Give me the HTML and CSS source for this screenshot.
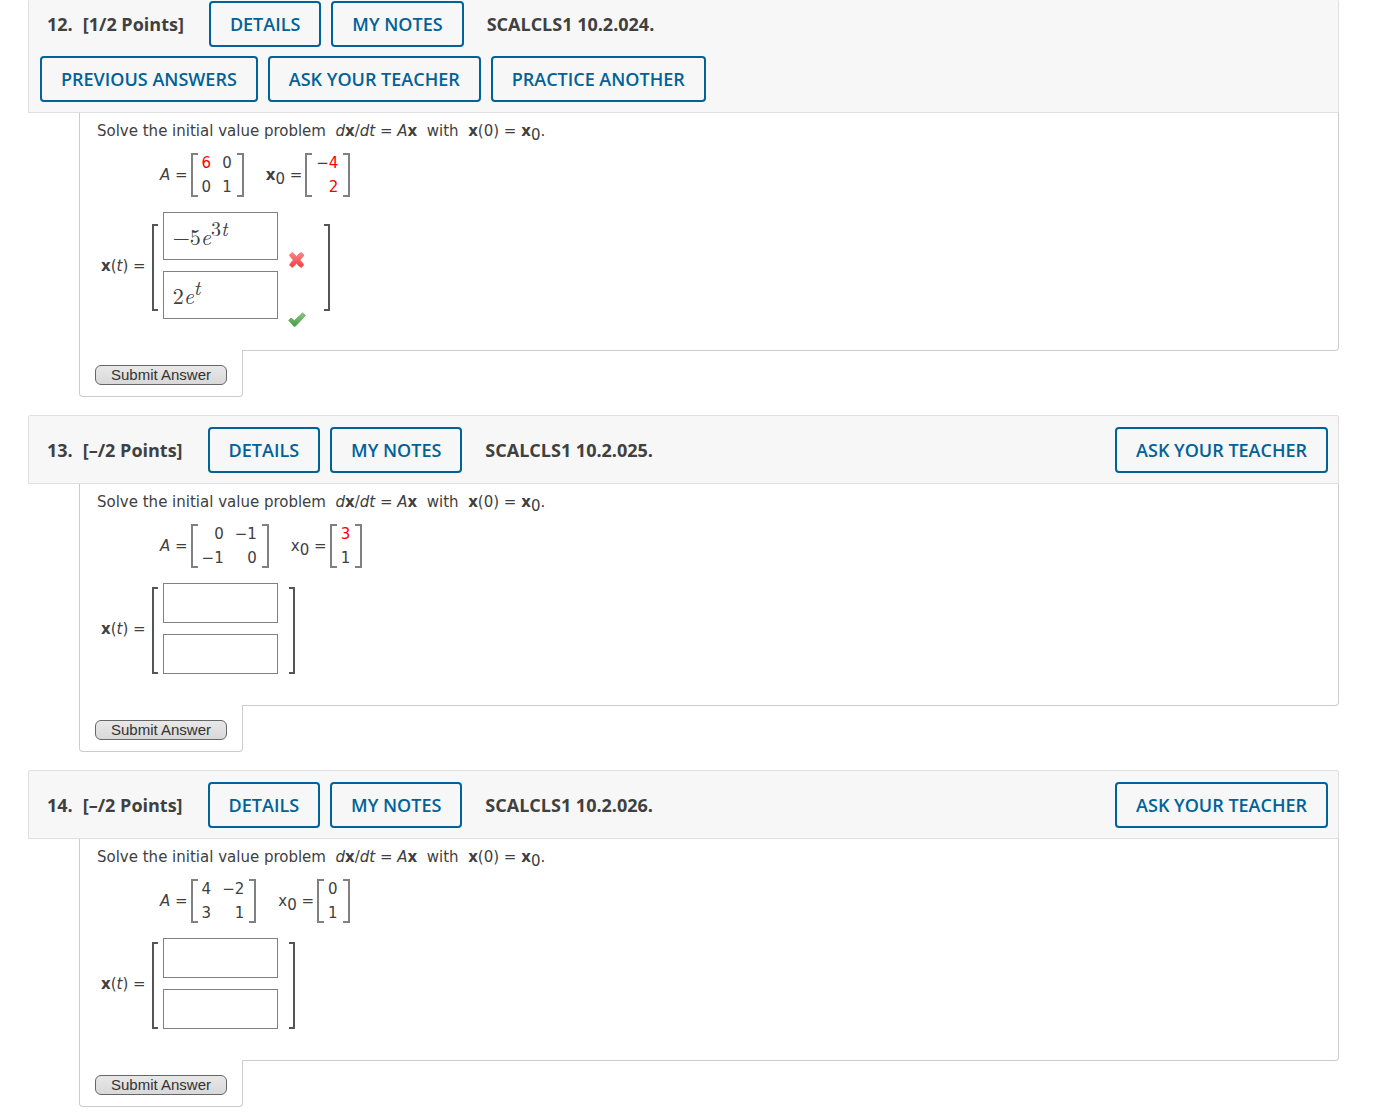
FILE: index.html
```
<!DOCTYPE html>
<html lang="en">
<head>
  <meta charset="UTF-8">
  <meta name="viewport" content="width=device-width, initial-scale=1">
  <title>SCALCLS1 10.2 Homework</title>
  <link rel="stylesheet" href="styles.css">
</head>
<body>
  <main>

    <section class="question first">
      <header class="question-header">
        <span class="number">12.</span>
        <span class="points">[1/2 Points]</span>
        <button class="btn" type="button">DETAILS</button>
        <button class="btn" type="button">MY NOTES</button>
        <span class="source">SCALCLS1 10.2.024.</span>
        <div class="header-row">
          <button class="btn" type="button">PREVIOUS ANSWERS</button>
          <button class="btn" type="button">ASK YOUR TEACHER</button>
          <button class="btn" type="button">PRACTICE ANOTHER</button>
        </div>
      </header>
      <form class="question-body">
        <div class="content">
          <p class="prompt">Solve the initial value problem &nbsp;<i>d</i><b>x</b>/<i>dt</i> = <i>A</i><b>x</b>&nbsp; with &nbsp;<b>x</b>(0) = <b>x</b><sub>0</sub>.</p>
          <div class="given">
            <span><i>A</i> =</span>
            <div class="matrix cols-2">
              <span class="red">6</span><span>0</span>
              <span>0</span><span>1</span>
            </div>
            <span class="vector-name"><b>x</b><sub>0</sub> =</span>
            <div class="matrix">
              <span><span>−</span><span class="red">4</span></span>
              <span class="red">2</span>
            </div>
          </div>
          <div class="answer">
            <span class="answer-name"><b>x</b>(<i>t</i>) =</span>
            <div class="bracket left"></div>
            <div class="fields">
              <div class="field math" role="textbox" contenteditable="true" aria-label="First component of x(t)">−5<i>e</i><sup>3<i>t</i></sup></div>
              <div class="field math" role="textbox" contenteditable="true" aria-label="Second component of x(t)">2<i>e</i><sup><i>t</i></sup></div>
            </div>
            <div class="marks">
              <svg class="mark" viewBox="0 0 18 18" role="img" aria-label="Incorrect">
                <defs>
                  <linearGradient id="wrong" x1="0" y1="0" x2="0" y2="1">
                    <stop offset="0" stop-color="#ff8584"/>
                    <stop offset="1" stop-color="#ee3e43"/>
                  </linearGradient>
                </defs>
                <path d="M1.5 4 4 1.5Q5 1.5 8.500 5.500 12 1.500 13.500 1.500L15.800 4Q15.800 5 12 9 15.800 13 15.800 14L13.500 16.500Q12 16.500 8.500 12.500 5 16.500 4 16.500L1.500 14Q1.500 13 5.300 9 1.500 5 1.500 4Z" fill="url(#wrong)" stroke="#f26b6d" stroke-width=".7"/>
              </svg>
              <svg class="mark" viewBox="0 0 18 18" role="img" aria-label="Correct">
                <defs>
                  <linearGradient id="right" x1="0" y1="0" x2="0" y2="1">
                    <stop offset="0" stop-color="#8bcb80"/>
                    <stop offset="1" stop-color="#439b43"/>
                  </linearGradient>
                </defs>
                <path d="M.7 9.300 3 7 6.400 9.600 14.500 2 17.400 4.300Q13 9.500 7.300 15.300L5.800 15.300Z" fill="url(#right)" stroke="#59a556" stroke-width=".8" stroke-linejoin="round"/>
              </svg>
            </div>
            <div class="bracket right"></div>
          </div>
        </div>
        <div class="submit-tab">
          <button class="submit-btn" type="button">Submit Answer</button>
        </div>
      </form>
    </section>

    <section class="question">
      <header class="question-header">
        <span class="number">13.</span>
        <span class="points">[–/2 Points]</span>
        <button class="btn" type="button">DETAILS</button>
        <button class="btn" type="button">MY NOTES</button>
        <span class="source">SCALCLS1 10.2.025.</span>
        <button class="btn push-right" type="button">ASK YOUR TEACHER</button>
      </header>
      <form class="question-body">
        <div class="content">
          <p class="prompt">Solve the initial value problem &nbsp;<i>d</i><b>x</b>/<i>dt</i> = <i>A</i><b>x</b>&nbsp; with &nbsp;<b>x</b>(0) = <b>x</b><sub>0</sub>.</p>
          <div class="given">
            <span><i>A</i> =</span>
            <div class="matrix cols-2">
              <span>0</span><span>−1</span>
              <span>−1</span><span>0</span>
            </div>
            <span class="vector-name">x<sub>0</sub> =</span>
            <div class="matrix">
              <span class="red">3</span>
              <span>1</span>
            </div>
          </div>
          <div class="answer">
            <span class="answer-name"><b>x</b>(<i>t</i>) =</span>
            <div class="bracket left"></div>
            <div class="fields">
              <input class="field" type="text" aria-label="First component of x(t)">
              <input class="field" type="text" aria-label="Second component of x(t)">
            </div>
            <div class="bracket right"></div>
          </div>
        </div>
        <div class="submit-tab">
          <button class="submit-btn" type="button">Submit Answer</button>
        </div>
      </form>
    </section>

    <section class="question">
      <header class="question-header">
        <span class="number">14.</span>
        <span class="points">[–/2 Points]</span>
        <button class="btn" type="button">DETAILS</button>
        <button class="btn" type="button">MY NOTES</button>
        <span class="source">SCALCLS1 10.2.026.</span>
        <button class="btn push-right" type="button">ASK YOUR TEACHER</button>
      </header>
      <form class="question-body">
        <div class="content">
          <p class="prompt">Solve the initial value problem &nbsp;<i>d</i><b>x</b>/<i>dt</i> = <i>A</i><b>x</b>&nbsp; with &nbsp;<b>x</b>(0) = <b>x</b><sub>0</sub>.</p>
          <div class="given">
            <span><i>A</i> =</span>
            <div class="matrix cols-2">
              <span>4</span><span>−2</span>
              <span>3</span><span>1</span>
            </div>
            <span class="vector-name">x<sub>0</sub> =</span>
            <div class="matrix">
              <span>0</span>
              <span>1</span>
            </div>
          </div>
          <div class="answer">
            <span class="answer-name"><b>x</b>(<i>t</i>) =</span>
            <div class="bracket left"></div>
            <div class="fields">
              <input class="field" type="text" aria-label="First component of x(t)">
              <input class="field" type="text" aria-label="Second component of x(t)">
            </div>
            <div class="bracket right"></div>
          </div>
        </div>
        <div class="submit-tab">
          <button class="submit-btn" type="button">Submit Answer</button>
        </div>
      </form>
    </section>

  </main>
</body>
</html>
```
FILE: styles.css
```
* {
  box-sizing: border-box;
}

body {
  margin: 0;
  padding: 0 50px 12px 28px;
  background: #fff;
  color: #404040;
  font-family: Verdana, "DejaVu Sans", sans-serif;
  font-size: 15px;
}

.question {
  margin-bottom: 18px;
}

.question:last-child {
  margin-bottom: 0;
}

/* Header bar */
.question-header {
  display: flex;
  flex-wrap: wrap;
  align-items: center;
  gap: 9px 10px;
  padding: 11px 10px 10px 18px;
  background: #f7f7f7;
  border: 1px solid #dfdfdf;
  border-radius: 2px 2px 0 0;
  font: 700 18px/24px "Open Sans", sans-serif;
}

.question.first .question-header {
  padding-top: 1px;
  border-top: none;
}

.points {
  margin-right: 15px;
}

.source {
  margin-left: 13px;
}

.header-row {
  display: flex;
  flex-basis: 100%;
  gap: 10px;
  margin-left: -7px;
}

.push-right {
  margin-left: auto;
}

.btn {
  height: 46px;
  padding: 0 19px;
  background: transparent;
  border: 2px solid #006298;
  border-radius: 4px;
  color: #006298;
  font: 600 18px/24px "Open Sans", sans-serif;
  cursor: pointer;
}

/* Question box */
.question-body {
  margin-left: 51px;
}

.content {
  padding: 8px 17px 31px;
  border: solid #ccc;
  border-width: 0 1px 1px;
  border-radius: 0 0 4px 0;
}

.prompt {
  margin: 0;
  line-height: 20px;
}

sub {
  font-size: 15px;
  line-height: 0;
}

.red {
  color: #f00;
}

.given {
  display: flex;
  align-items: center;
  gap: 3px;
  margin: 10px 0 0 63px;
}

.vector-name {
  margin-left: 19px;
}

.matrix {
  display: grid;
  column-gap: 11px;
  position: relative;
  padding: 0 12px 0 11px;
  line-height: 24px;
  text-align: right;
}

.matrix.cols-2 {
  grid-template-columns: auto auto;
}

.matrix::before,
.matrix::after {
  content: "";
  position: absolute;
  top: 2px;
  bottom: 2px;
  width: 5px;
  border: 2px solid #808080;
}

.matrix::before {
  left: 0;
  border-right: none;
}

.matrix::after {
  right: 0;
  border-left: none;
}

/* Answer vector */
.answer {
  display: flex;
  align-items: center;
  margin: 13px 0 0 4px;
}

.answer-name {
  margin-right: 6px;
}

.bracket {
  width: 6px;
  height: 87px;
  margin-top: 3px;
  border: 2px solid #555;
}

.bracket.left {
  margin-right: 5px;
  border-right: none;
}

.bracket.right {
  margin-left: 11px;
  border-left: none;
}

.fields {
  display: flex;
  flex-direction: column;
  gap: 11px;
}

.field {
  width: 115px;
  height: 40px;
  padding: 0 9px;
  background: #fff;
  border: 1px solid #808080;
  border-radius: 0;
  font-size: 15px;
}

.field.math {
  height: 48px;
  font: 22px/46px "Latin Modern Roman", "Liberation Serif", serif;
}

.field.math sup {
  font-size: 20px;
  line-height: 0;
  vertical-align: 9px;
}

.marks {
  display: flex;
  flex-direction: column;
  align-self: flex-start;
  gap: 42px;
  height: 107px;
  margin-left: 10px;
  padding-top: 39px;
}

.mark {
  flex: none;
  width: 18px;
  height: 18px;
}

.marks + .bracket.right {
  margin-left: 18px;
}

/* Submit tab hanging below the box */
.submit-tab {
  width: 164px;
  margin-top: -1px;
  padding: 15px 15px 11px;
  background: #fff;
  border: solid #ccc;
  border-width: 0 1px 1px;
  border-radius: 0 0 4px 4px;
}

.submit-btn {
  display: block;
  width: 132px;
  height: 20px;
  padding: 0;
  background: linear-gradient(#e8e8e8, #d8d8d8);
  border: 1px solid #666;
  border-radius: 6px;
  color: #333;
  font: 15px/16px "Liberation Sans", Arial, sans-serif;
  cursor: pointer;
}
```
